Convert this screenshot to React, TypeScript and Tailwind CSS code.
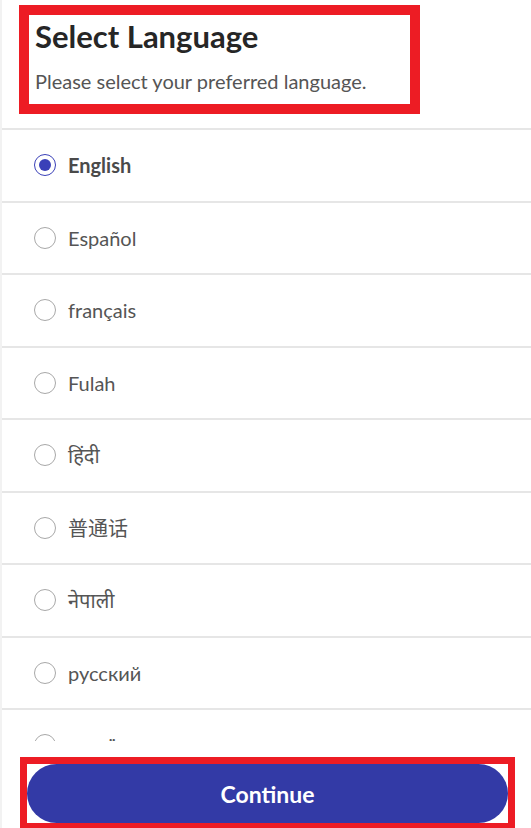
import { useState } from "react";

const languages = [
  "English",
  "Español",
  "français",
  "Fulah",
  "हिंदी",
  "普通话",
  "नेपाली",
  "русский",
  "українська",
  "Tiếng Việt",
];

function Radio({ checked }: { checked: boolean }) {
  return (
    <span
      className={`flex h-[22px] w-[22px] shrink-0 items-center justify-center rounded-full border-[1.5px] ${
        checked ? "border-[#3a40b8]" : "border-[#a8a8a8]"
      }`}
    >
      {checked && <span className="h-[12px] w-[12px] rounded-full bg-[#3a40b8]" />}
    </span>
  );
}

export default function App() {
  const [selected, setSelected] = useState("English");

  return (
    <div
      className="flex h-screen flex-col overflow-hidden border-l-2 border-[#f2f2f2] bg-white"
      style={{ fontFamily: "Lato, 'Noto Sans', 'Noto Sans CJK SC', sans-serif" }}
    >
      <header className="mb-[14px] ml-[17px] mt-[5px] h-[109px] w-[401px] shrink-0 border-[10px] border-[#ed1c24] pl-[6px] pt-[3px]">
        <h1 className="text-[31px] font-bold leading-[37px] text-[#262626]">Select Language</h1>
        <p className="mt-[12px] text-[20px] leading-[28px] text-[#555555]">
          Please select your preferred language.
        </p>
      </header>

      <ul className="min-h-0 flex-1 overflow-hidden border-t-2 border-[#e6e6e6]">
        {languages.map((lang) => {
          const checked = lang === selected;
          return (
            <li
              key={lang}
              onClick={() => setSelected(lang)}
              className="flex h-[72.5px] cursor-pointer items-center gap-[12px] border-b-2 border-[#e6e6e6] pl-[32px]"
            >
              <Radio checked={checked} />
              <span
                className={`text-[20px] leading-none ${
                  checked ? "font-bold text-[#4a4a4a]" : "text-[#555555]"
                }`}
              >
                {lang}
              </span>
            </li>
          );
        })}
      </ul>

      <footer className="-mb-[2px] shrink-0 pt-[16px]">
        <div className="ml-[18px] w-[495px] border-[7px] border-[#ed1c24] bg-white">
          <button className="flex h-[59px] w-full items-center justify-center rounded-full bg-[#333aa6] pt-[2px] text-[23px] font-bold text-white">
            Continue
          </button>
        </div>
      </footer>
    </div>
  );
}
